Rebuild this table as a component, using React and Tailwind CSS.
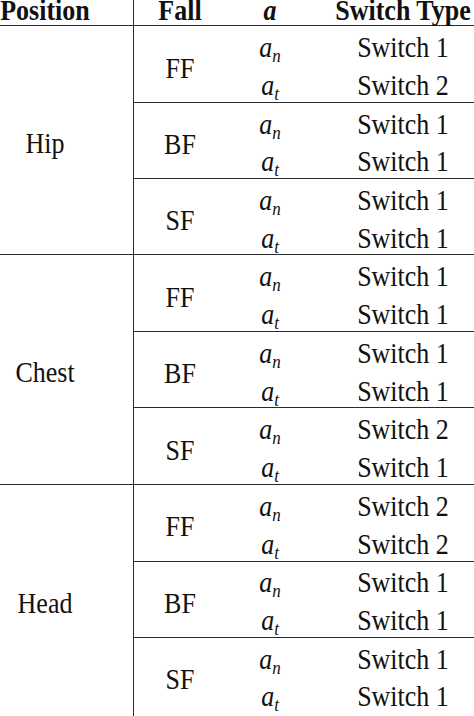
import React from 'react';

const GROUPS = [
    {
        position: 'Hip',
        falls: [
            { fall: 'FF', an: 'Switch 1', at: 'Switch 2' },
            { fall: 'BF', an: 'Switch 1', at: 'Switch 1' },
            { fall: 'SF', an: 'Switch 1', at: 'Switch 1' },
        ],
    },
    {
        position: 'Chest',
        falls: [
            { fall: 'FF', an: 'Switch 1', at: 'Switch 1' },
            { fall: 'BF', an: 'Switch 1', at: 'Switch 1' },
            { fall: 'SF', an: 'Switch 2', at: 'Switch 1' },
        ],
    },
    {
        position: 'Head',
        falls: [
            { fall: 'FF', an: 'Switch 2', at: 'Switch 2' },
            { fall: 'BF', an: 'Switch 1', at: 'Switch 1' },
            { fall: 'SF', an: 'Switch 1', at: 'Switch 1' },
        ],
    },
];

const Txt = ({ children, className = '' }) => (
    <span className={`inline-block leading-none scale-y-110 ${className}`}>{children}</span>
);

const Accel = ({ sub }) => (
    <Txt className="italic">
        a<span className="relative top-[5px] text-[17px]">{sub}</span>
    </Txt>
);

const Row = ({ sub, value }) => (
    <div className="flex h-[38px] items-center pt-[6px]">
        <div className="flex w-[88px] justify-center">
            <Accel sub={sub} />
        </div>
        <div className="flex w-[160px] justify-center pl-[18px]">
            <Txt className="whitespace-nowrap">{value}</Txt>
        </div>
    </div>
);

export default function App() {
    return (
        <div
            className="flex h-[716px] w-[474px] flex-col overflow-hidden bg-white text-[26px] text-[#111]"
            style={{ fontFamily: '"Liberation Serif", "Times New Roman", serif' }}
        >
            {/* Header */}
            <div className="flex h-[26px] shrink-0 border-b-[1.4px] border-[#2a2a2a] font-bold">
                <div className="flex w-[134px] shrink-0 items-center justify-center border-r-[1.4px] border-[#2a2a2a] pr-[43px] pb-[3px]">
                    <Txt>Position</Txt>
                </div>
                <div className="flex w-[92px] items-center justify-center pb-[3px]">
                    <Txt>Fall</Txt>
                </div>
                <div className="flex w-[88px] items-center justify-center pb-[3px]">
                    <Txt className="italic">a</Txt>
                </div>
                <div className="flex w-[160px] items-center justify-center pl-[18px] pb-[3px]">
                    <Txt className="whitespace-nowrap">Switch Type</Txt>
                </div>
            </div>

            {GROUPS.map((g, gi) => {
                const last = gi === GROUPS.length - 1;
                return (
                    <div
                        key={g.position}
                        className={`flex ${last ? 'flex-1' : 'shrink-0 border-b-[1.4px] border-[#2a2a2a]'}`}
                    >
                        <div className="flex w-[134px] shrink-0 items-center justify-center border-r-[1.4px] border-[#2a2a2a] pt-[7px] pr-[43px]">
                            <Txt>{g.position}</Txt>
                        </div>
                        <div className="flex flex-1 flex-col">
                            {g.falls.map((f, i) => (
                                <div
                                    key={f.fall}
                                    className={`flex h-[76.1px] ${i > 0 ? 'border-t-[1.4px] border-[#2a2a2a]' : ''}`}
                                >
                                    <div className="flex w-[92px] shrink-0 items-center justify-center pt-[9px]">
                                        <Txt>{f.fall}</Txt>
                                    </div>
                                    <div className="flex flex-col justify-end">
                                        <Row sub="n" value={f.an} />
                                        <Row sub="t" value={f.at} />
                                    </div>
                                </div>
                            ))}
                        </div>
                    </div>
                );
            })}
        </div>
    );
}
